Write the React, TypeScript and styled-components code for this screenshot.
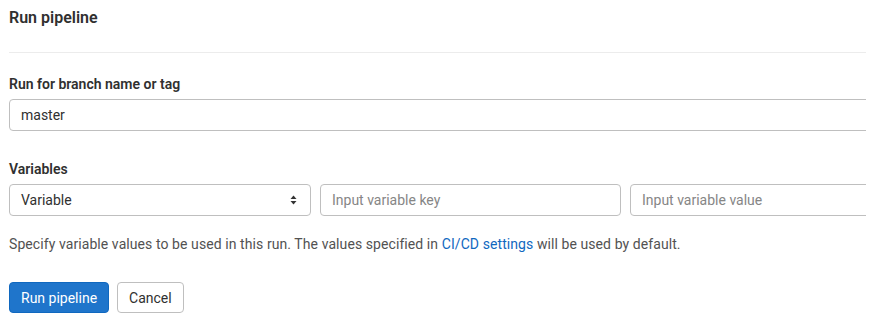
import React from "react";
import styled, { createGlobalStyle } from "styled-components";

const GlobalStyle = createGlobalStyle`
  body {
    margin: 0;
    background: #fff;
    font-family: Roboto, "Liberation Sans", sans-serif;
    color: #303030;
  }
`;

const Page = styled.div`
  width: 857px;
  padding: 6px 0 0 9px;
  overflow: hidden;
`;

const Header = styled.div`
  padding-bottom: 22px;
  border-bottom: 1px solid #ececec;
  margin-bottom: 21px;
`;

const Title = styled.h3`
  margin: 0;
  font-size: 16px;
  line-height: 24px;
  font-weight: 600;
  color: #303030;
`;

const Field = styled.div`
  margin-bottom: 28px;
`;

const Label = styled.label`
  display: block;
  font-size: 14px;
  line-height: 20px;
  font-weight: 600;
  margin-bottom: 5px;
`;

const TextInput = styled.input<{ $wide?: boolean }>`
  box-sizing: border-box;
  width: ${(p) => (p.$wide ? "calc(100% + 20px)" : "100%")};
  height: 32px;
  padding: 0 11px;
  border: 1px solid #bfbfbf;
  border-radius: 4px;
  font-family: inherit;
  font-size: 14px;
  color: #303030;
  background: #fff;
  outline: none;
  &::placeholder {
    color: #868686;
  }
`;

const VariableRow = styled.div`
  display: grid;
  grid-template-columns: 302px 301px 1fr;
  gap: 9px;
  width: calc(100% + 20px);
`;

const SelectBox = styled.div`
  box-sizing: border-box;
  height: 32px;
  display: flex;
  align-items: center;
  justify-content: space-between;
  padding: 0 13px 0 11px;
  border: 1px solid #bfbfbf;
  border-radius: 4px;
  font-size: 14px;
  color: #303030;
`;

const HelpText = styled.p`
  margin: 18px 0 0;
  font-size: 14px;
  line-height: 20px;
  letter-spacing: 0.08px;
  color: #525252;
`;

const Link = styled.a`
  color: #1068bf;
  text-decoration: none;
`;

const Actions = styled.div`
  display: flex;
  gap: 8px;
  margin-top: 28px;
`;

const Button = styled.button<{ $primary?: boolean }>`
  box-sizing: border-box;
  height: 31px;
  padding: 0 11px;
  border-radius: 4px;
  font-family: inherit;
  font-size: 14px;
  cursor: pointer;
  border: 1px solid ${(p) => (p.$primary ? "#1068bf" : "#bfbfbf")};
  background: ${(p) => (p.$primary ? "#1f75cb" : "#fff")};
  color: ${(p) => (p.$primary ? "#fff" : "#303030")};
`;

const SelectArrows = () => (
  <svg width="7" height="10" viewBox="0 0 7 10">
    <path d="M3.5 0.5 L6.5 4 H0.5 Z" fill="#333" />
    <path d="M3.5 9.5 L6.5 6 H0.5 Z" fill="#333" />
  </svg>
);

export default function App() {
  return (
    <>
      <GlobalStyle />
      <Page>
        <Header>
          <Title>Run pipeline</Title>
        </Header>
        <Field>
          <Label>Run for branch name or tag</Label>
          <TextInput $wide defaultValue="master" />
        </Field>
        <Label>Variables</Label>
        <VariableRow>
          <SelectBox>
            Variable
            <SelectArrows />
          </SelectBox>
          <TextInput placeholder="Input variable key" />
          <TextInput placeholder="Input variable value" />
        </VariableRow>
        <HelpText>
          Specify variable values to be used in this run. The values specified
          in <Link href="#">CI/CD settings</Link> will be used by default.
        </HelpText>
        <Actions>
          <Button $primary>Run pipeline</Button>
          <Button>Cancel</Button>
        </Actions>
      </Page>
    </>
  );
}
